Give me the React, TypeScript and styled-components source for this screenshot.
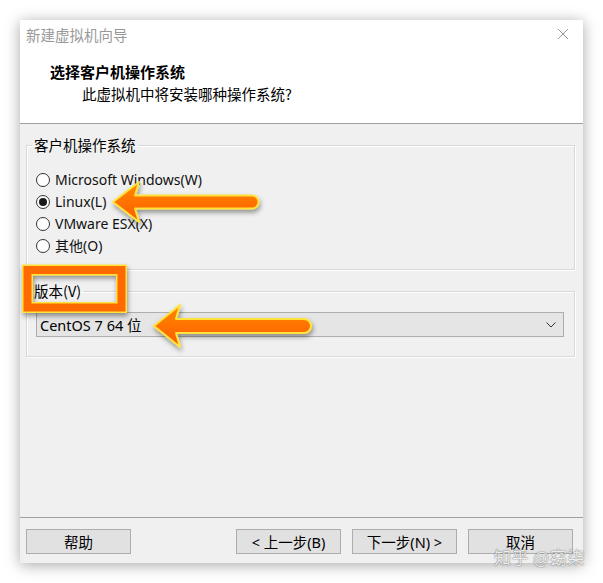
import React from "react";
import styled, { createGlobalStyle } from "styled-components";

const Global = createGlobalStyle`
  html, body { margin: 0; padding: 0; background: #ffffff; }
  body { font-family: "Noto Sans", "Noto Sans CJK SC", sans-serif; }
`;

const Page = styled.div`
  position: relative;
  width: 603px;
  height: 583px;
  padding: 20px 0 0 20px;
  box-sizing: border-box;
  background: #ffffff;
  font-size: 14px;
  color: #000;
`;

const Window = styled.div`
  width: 563px;
  height: 543px;
  display: flex;
  flex-direction: column;
  background: #f0f0f0;
  box-shadow: 0 2px 14px rgba(0, 0, 0, 0.35);
`;

const TitleBar = styled.div`
  height: 28px;
  display: flex;
  align-items: center;
  justify-content: space-between;
  padding: 0 14px 0 6px;
  background: #ffffff;
  color: #999999;
  font-family: "Noto Sans CJK SC", sans-serif;
  font-size: 14.5px;
`;

const CloseIcon = styled.svg`
  width: 12px;
  height: 12px;
`;

const Header = styled.div`
  height: 76px;
  background: #ffffff;
  border-bottom: 1px solid #a0a0a0;
  padding: 14px 0 0 30px;
  box-sizing: border-box;
  font-family: "Noto Sans CJK SC", sans-serif;
`;

const HeaderTitle = styled.div`
  font-weight: 700;
  font-size: 15px;
  line-height: 20px;
`;

const HeaderSub = styled.div`
  font-size: 14.5px;
  line-height: 20px;
  margin: 2px 0 0 32px;
`;

const Body = styled.div`
  flex: 1;
  padding: 11px 8px 0 6px;
  display: flex;
  flex-direction: column;
  gap: 11px;
`;

const Group = styled.fieldset<{ $pb: number }>`
  margin: 0;
  padding: 0 10px ${(p) => p.$pb}px 9px;
  border: 1px solid #d8d8d8;
  box-shadow: inset 1px 1px 0 #ffffff, 1px 1px 0 #ffffff;
  min-width: 0;
`;

const Legend = styled.legend`
  margin-left: -4px;
  padding: 0 2px;
  line-height: 20px;
  font-family: "Noto Sans CJK SC", sans-serif;
  font-size: 14.5px;
`;

const RadioList = styled.div`
  display: flex;
  flex-direction: column;
  padding-top: 14px;
`;

const RadioRow = styled.label`
  height: 22px;
  display: flex;
  align-items: center;
  gap: 5px;
`;

const RadioCircle = styled.span<{ $checked?: boolean }>`
  width: 14px;
  height: 14px;
  box-sizing: border-box;
  border-radius: 50%;
  border: 1px solid #333333;
  background: #ffffff;
  display: flex;
  align-items: center;
  justify-content: center;
  &::after {
    content: "";
    width: 8px;
    height: 8px;
    border-radius: 50%;
    background: #1a1a1a;
    display: ${(p) => (p.$checked ? "block" : "none")};
  }
`;

const RadioText = styled.span`
  font-size: 14px;
  line-height: 20px;
  color: #111;
`;

const SelectBox = styled.div`
  margin-top: 11px;
  height: 25px;
  box-sizing: border-box;
  border: 1px solid #adadad;
  background: #e5e5e5;
  display: flex;
  align-items: center;
  justify-content: space-between;
  padding: 0 7px 0 3px;
  font-size: 14.5px;
`;

const Chevron = styled.svg`
  width: 10px;
  height: 6px;
`;

const Footer = styled.div`
  height: 46px;
  border-top: 1px solid #a0a0a0;
  box-sizing: border-box;
  display: flex;
  align-items: flex-start;
  padding: 11px 10px 0 6px;
  gap: 11px;
`;

const Button = styled.button<{ $push?: boolean }>`
  width: 105px;
  height: 25px;
  margin-left: ${(p) => (p.$push ? "auto" : "0")};
  border: 1px solid #adadad;
  background: #e1e1e1;
  font-family: "Noto Sans", "Noto Sans CJK SC", sans-serif;
  font-size: 14.5px;
  color: #000;
  padding: 0;
  display: flex;
  align-items: center;
  justify-content: center;
`;

const Overlay = styled.svg`
  position: absolute;
  left: 0;
  top: 0;
  width: 603px;
  height: 583px;
  pointer-events: none;
`;

const Watermark = styled.div`
  position: absolute;
  left: 494px;
  top: 544px;
  font-family: "Noto Sans CJK SC", sans-serif;
  font-size: 17px;
  color: rgba(255, 255, 255, 0.9);
  text-shadow: 0 0 1px rgba(0, 0, 0, 0.55), 0 0 2px rgba(0, 0, 0, 0.3);
  letter-spacing: 0.5px;
`;

const arrowPath = (tipX: number, tipY: number, headLen: number, headHalf: number, shaftEnd: number, shaftHalf: number) => {
  const bx = tipX + headLen;
  return `M ${tipX} ${tipY} L ${bx} ${tipY - headHalf} L ${bx - 4} ${tipY - shaftHalf} L ${shaftEnd} ${tipY - shaftHalf} A ${shaftHalf} ${shaftHalf} 0 0 1 ${shaftEnd} ${tipY + shaftHalf} L ${bx - 4} ${tipY + shaftHalf} L ${bx} ${tipY + headHalf} Z`;
};

export default function App() {
  const options = [
    { label: "Microsoft Windows(W)", checked: false },
    { label: "Linux(L)", checked: true },
    { label: "VMware ESX(X)", checked: false },
    { label: "其他(O)", checked: false },
  ];
  return (
    <>
      <Global />
      <Page>
        <Window>
          <TitleBar>
            <span>新建虚拟机向导</span>
            <CloseIcon viewBox="0 0 12 12">
              <path d="M1 1 L11 11 M11 1 L1 11" stroke="#9a9a9a" strokeWidth="1" fill="none" />
            </CloseIcon>
          </TitleBar>
          <Header>
            <HeaderTitle>选择客户机操作系统</HeaderTitle>
            <HeaderSub>此虚拟机中将安装哪种操作系统?</HeaderSub>
          </Header>
          <Body>
            <Group $pb={12}>
              <Legend>客户机操作系统</Legend>
              <RadioList>
                {options.map((o) => (
                  <RadioRow key={o.label}>
                    <RadioCircle $checked={o.checked} />
                    <RadioText>{o.label}</RadioText>
                  </RadioRow>
                ))}
              </RadioList>
            </Group>
            <Group $pb={19}>
              <Legend>版本(V)</Legend>
              <SelectBox>
                <span>CentOS 7 64 位</span>
                <Chevron viewBox="0 0 10 6">
                  <path d="M0.5 0.5 L5 5 L9.5 0.5" stroke="#333" strokeWidth="1" fill="none" />
                </Chevron>
              </SelectBox>
            </Group>
          </Body>
          <Footer>
            <Button>帮助</Button>
            <Button $push>&lt; 上一步(B)</Button>
            <Button>下一步(N) &gt;</Button>
            <Button>取消</Button>
          </Footer>
        </Window>
        <Overlay viewBox="0 0 603 583">
          <defs>
            <filter id="sh" x="-20%" y="-40%" width="140%" height="180%">
              <feDropShadow dx="1" dy="3" stdDeviation="2.5" floodColor="#000" floodOpacity="0.4" />
            </filter>
            <linearGradient id="og" x1="0" y1="0" x2="0" y2="1">
              <stop offset="0" stopColor="#ff8a00" />
              <stop offset="1" stopColor="#ff5a00" />
            </linearGradient>
          </defs>
          <g filter="url(#sh)">
            <rect x="27.5" y="270" width="94" height="37.5" fill="none" stroke="#ffe23a" strokeWidth="11" />
            <rect x="27.5" y="270" width="94" height="37.5" fill="none" stroke="#ff6a00" strokeWidth="8" />
          </g>
          <path d={arrowPath(113, 202, 26, 20, 252, 6.5)} fill="url(#og)" stroke="#ffe23a" strokeWidth="2" strokeLinejoin="round" filter="url(#sh)" />
          <path d={arrowPath(154, 326, 26, 21, 304, 7)} fill="url(#og)" stroke="#ffe23a" strokeWidth="2" strokeLinejoin="round" filter="url(#sh)" />
        </Overlay>
        <Watermark>知乎 @窈柒</Watermark>
      </Page>
    </>
  );
}
